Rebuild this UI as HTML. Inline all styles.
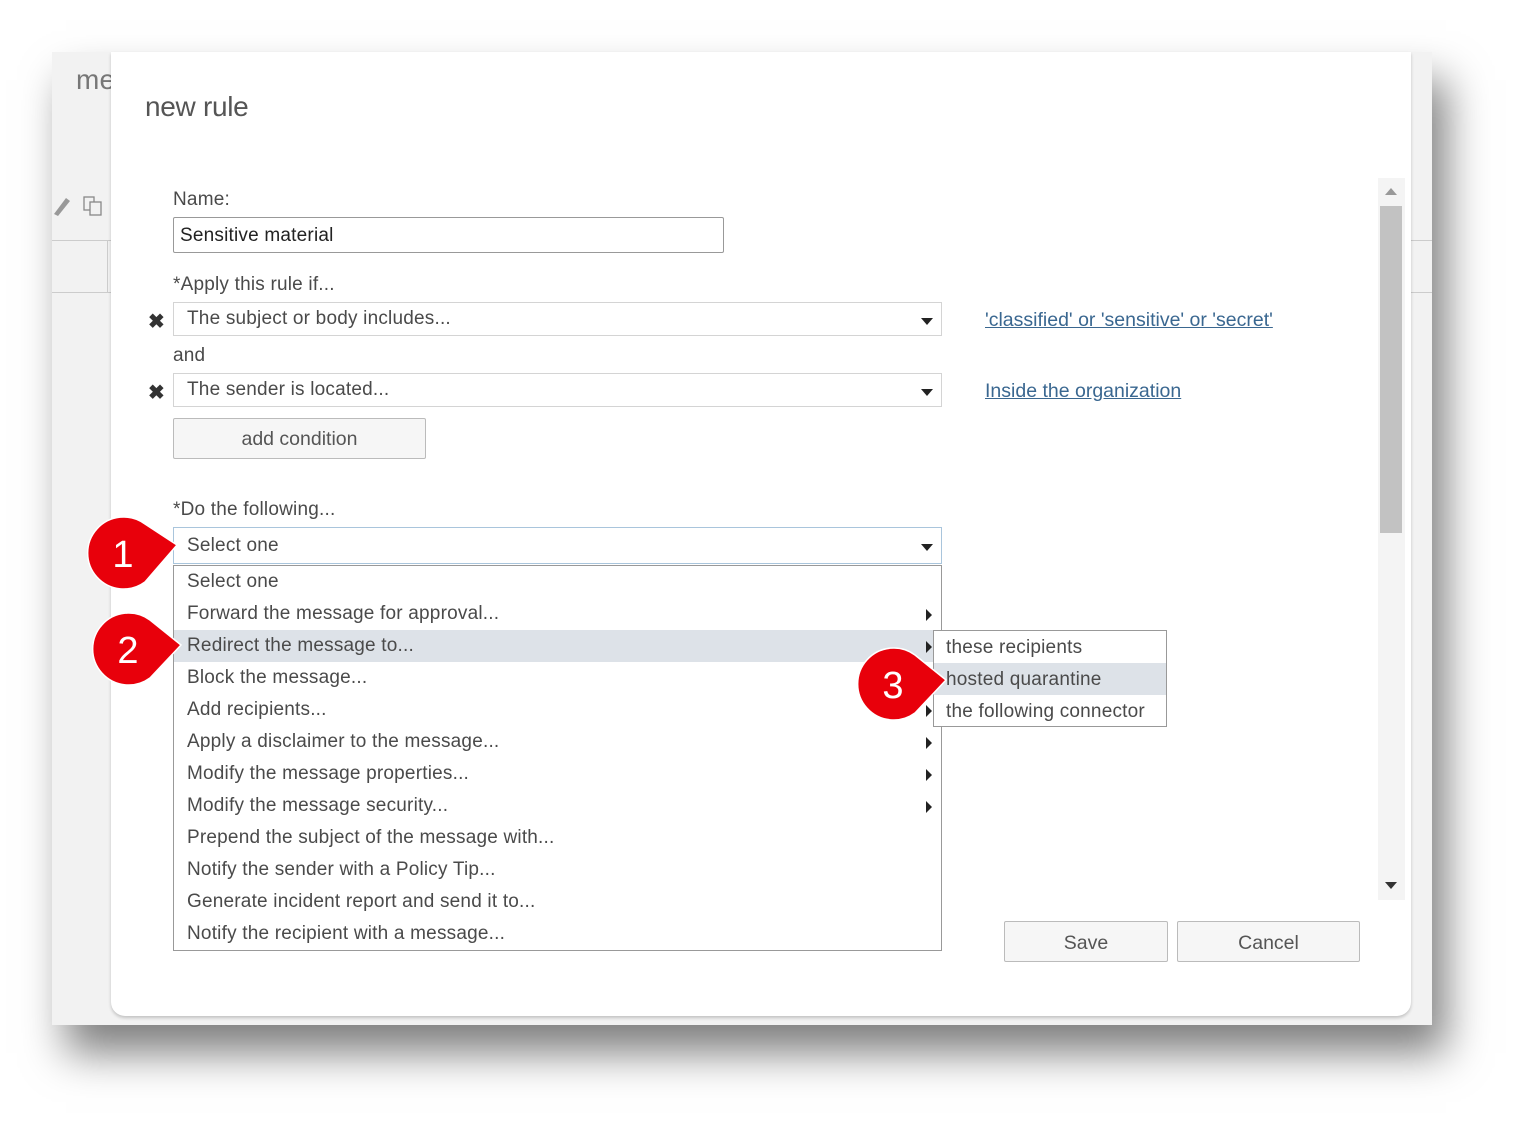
<!DOCTYPE html>
<html><head><meta charset="utf-8"><style>
body{margin:0;width:1536px;height:1130px;background:#fff;position:relative;overflow:hidden;font-family:"Liberation Sans",sans-serif;color:#4a4a4a}
.a{position:absolute}
.win{left:52px;top:52px;width:1380px;height:973px;background:#f2f2f2;box-shadow:14px 28px 40px rgba(0,0,0,0.5)}
.dlg{left:111px;top:52px;width:1300px;height:964px;background:#fff;border-radius:0 0 14px 14px;box-shadow:0 2px 3px rgba(0,0,0,.2)}
.t{font-size:19px;letter-spacing:0.2px;line-height:22px;white-space:nowrap}
.dd{border:1px solid #d4d4d4;background:#fff;height:34px;box-sizing:border-box}
.dd span{position:absolute;left:13px;top:5px}
.arr{position:absolute;width:0;height:0;border-left:6px solid transparent;border-right:6px solid transparent;border-top:7px solid #222}
.ra{position:absolute;width:0;height:0;border-top:6px solid transparent;border-bottom:6px solid transparent;border-left:6px solid #222}
.x{font-size:20px;font-weight:bold;color:#333}
.btn{border:1px solid #bbb;border-radius:2px;background:#f6f6f6;text-align:center;font-size:19.5px;color:#555;box-sizing:border-box}
.lnk{color:#3a6790;text-decoration:underline;font-size:19.5px}
.mi{position:absolute;left:0;width:767px;height:32px}
.mi span{position:absolute;left:13px;top:5px}
</style></head><body>
<div class="a win"></div>
<div class="a t" style="left:76px;top:64px;font-size:28px;line-height:32px;color:#777">me</div>
<svg class="a" style="left:52px;top:192px" width="60" height="30"><path d="M2 22 L14 6 L18 9 L6 24 Z" fill="#999"/><rect x="32" y="5" width="10" height="13" fill="none" stroke="#888" stroke-width="1.3"/><rect x="38" y="10" width="11" height="13" fill="#f2f2f2" stroke="#888" stroke-width="1.3"/></svg>
<div class="a" style="left:52px;top:240px;width:60px;height:1px;background:#ccc"></div>
<div class="a" style="left:52px;top:292px;width:60px;height:1px;background:#ccc"></div>
<div class="a" style="left:107px;top:240px;width:1px;height:52px;background:#ccc"></div>
<div class="a" style="left:1411px;top:240px;width:21px;height:1px;background:#ccc"></div>
<div class="a" style="left:1411px;top:292px;width:21px;height:1px;background:#ccc"></div>
<div class="a dlg"></div>
<div class="a t" style="left:145px;top:90px;font-size:28px;line-height:34px;color:#555;letter-spacing:-0.3px">new rule</div>
<div class="a t" style="left:173px;top:189px">Name:</div>
<div class="a" style="left:173px;top:217px;width:551px;height:36px;border:1px solid #999;border-radius:2px;box-sizing:border-box"></div>
<div class="a t" style="left:180px;top:225px;color:#222">Sensitive material</div>
<div class="a t" style="left:173px;top:274px">*Apply this rule if...</div>
<div class="a x" style="left:148px;top:309px">✖</div>
<div class="a dd" style="left:173px;top:302px;width:769px"><span class="t">The subject or body includes...</span><div class="arr" style="left:747px;top:15px"></div></div>
<div class="a lnk" style="left:985px;top:309px">'classified' or 'sensitive' or 'secret'</div>
<div class="a t" style="left:173px;top:345px">and</div>
<div class="a x" style="left:148px;top:380px">✖</div>
<div class="a dd" style="left:173px;top:373px;width:769px"><span class="t">The sender is located...</span><div class="arr" style="left:747px;top:15px"></div></div>
<div class="a lnk" style="left:985px;top:380px">Inside the organization</div>
<div class="a btn" style="left:173px;top:418px;width:253px;height:41px;line-height:40px">add condition</div>
<div class="a t" style="left:173px;top:499px">*Do the following...</div>
<div class="a dd" style="left:173px;top:527px;width:769px;height:37px;border-color:#a9c5dc"><span class="t" style="top:7px">Select one</span><div class="arr" style="left:747px;top:16px"></div></div>
<div class="a" style="left:173px;top:565px;width:769px;height:386px;border:1px solid #999;box-sizing:border-box;background:#fff">
<div class="mi" style="top:0"><span class="t">Select one</span></div>
<div class="mi" style="top:32px"><span class="t">Forward the message for approval...</span><div class="ra" style="left:752px;top:11px"></div></div>
<div class="mi" style="top:64px;background:#dde2e8"><span class="t">Redirect the message to...</span><div class="ra" style="left:752px;top:11px"></div></div>
<div class="mi" style="top:96px"><span class="t">Block the message...</span></div>
<div class="mi" style="top:128px"><span class="t">Add recipients...</span><div class="ra" style="left:752px;top:11px"></div></div>
<div class="mi" style="top:160px"><span class="t">Apply a disclaimer to the message...</span><div class="ra" style="left:752px;top:11px"></div></div>
<div class="mi" style="top:192px"><span class="t">Modify the message properties...</span><div class="ra" style="left:752px;top:11px"></div></div>
<div class="mi" style="top:224px"><span class="t">Modify the message security...</span><div class="ra" style="left:752px;top:11px"></div></div>
<div class="mi" style="top:256px"><span class="t">Prepend the subject of the message with...</span></div>
<div class="mi" style="top:288px"><span class="t">Notify the sender with a Policy Tip...</span></div>
<div class="mi" style="top:320px"><span class="t">Generate incident report and send it to...</span></div>
<div class="mi" style="top:352px"><span class="t">Notify the recipient with a message...</span></div>
</div>
<div class="a" style="left:933px;top:630px;width:234px;height:97px;border:1px solid #999;box-sizing:border-box;background:#fff">
<div class="a t" style="left:12px;top:6px">these recipients</div>
<div class="a" style="left:0;top:32px;width:232px;height:32px;background:#dde2e8"></div>
<div class="a t" style="left:12px;top:38px">hosted quarantine</div>
<div class="a t" style="left:12px;top:70px">the following connector</div>
</div>
<div class="a" style="left:1378px;top:178px;width:27px;height:722px;background:#f4f4f4"></div>
<div class="a" style="left:1380px;top:206px;width:22px;height:327px;background:#c2c2c2"></div>
<div class="arr" style="left:1385px;top:188px;border-top:0;border-bottom:7px solid #999"></div>
<div class="arr" style="left:1385px;top:882px;border-top-color:#333"></div>
<div class="a btn" style="left:1004px;top:921px;width:164px;height:41px;line-height:42px">Save</div>
<div class="a btn" style="left:1177px;top:921px;width:183px;height:41px;line-height:42px">Cancel</div>
<svg class="a" style="left:0;top:0" width="1536" height="1130">
<g fill="#e8000b" stroke="#fff" stroke-width="1.5">
<path transform="translate(123,553)" d="M54,-8 L22,-29 A36 36 0 1 0 22,29 Z"/>
<path transform="translate(128,649)" d="M53,-4 L22,-29 A36 36 0 1 0 22,29 Z"/>
<path transform="translate(893,684)" d="M53,-4 L22,-29 A36 36 0 1 0 22,29 Z"/>
</g>
<g fill="#fff" font-family="Liberation Sans, sans-serif" font-size="38" text-anchor="middle">
<text x="123" y="567">1</text><text x="128" y="663">2</text><text x="893" y="698">3</text>
</g>
</svg>
</body></html>
